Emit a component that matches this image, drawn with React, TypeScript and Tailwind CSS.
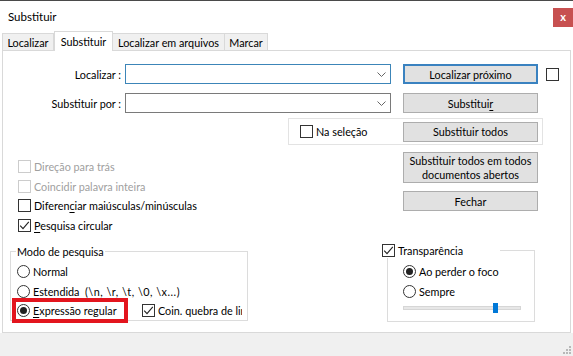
import React from "react"

const Check = ({ checked = false, disabled = false }: { checked?: boolean; disabled?: boolean }) => (
  <span
    className={`w-[13px] h-[13px] shrink-0 border bg-white flex items-center justify-center ${
      disabled ? "border-[#cccccc]" : "border-[#333333]"
    }`}
  >
    {checked && (
      <svg width="11" height="11" viewBox="0 0 11 11">
        <path d="M1.2 5.6 L4 8.6 L9.8 1.8" fill="none" stroke="#222" strokeWidth="1.1" />
      </svg>
    )}
  </span>
)

const Radio = ({ checked = false }: { checked?: boolean }) => (
  <span className="w-[13px] h-[13px] shrink-0 rounded-full border border-[#333333] bg-white flex items-center justify-center">
    {checked && <span className="w-[7px] h-[7px] rounded-full bg-[#222]" />}
  </span>
)

const Btn = ({
  children,
  focused = false,
  className = "",
}: {
  children: React.ReactNode
  focused?: boolean
  className?: string
}) => (
  <div
    className={`w-[135px] shrink-0 flex items-center justify-center text-center bg-[#e1e1e1] ${
      focused ? "border-2 border-[#3a82c0]" : "border border-[#adadad]"
    } ${className}`}
  >
    {children}
  </div>
)

const Combo = ({ focused = false }: { focused?: boolean }) => (
  <div
    className={`w-[266px] h-[20px] shrink-0 border bg-white flex items-center justify-end pr-[4px] ${
      focused ? "border-[#3c85b8]" : "border-[#7a7a7a]"
    }`}
  >
    <svg width="9" height="5" viewBox="0 0 9 5">
      <path d="M0.5 0.5 L4.5 4.5 L8.5 0.5" fill="none" stroke="#666" />
    </svg>
  </div>
)

const options = [
  { label: <>Direção para trás</>, disabled: true },
  { label: <>Coincidir palavra inteira</>, disabled: true },
  { label: <>Diferen<u className="underline-offset-2">c</u>iar maiúsculas/minúsculas</> },
  { label: <><u className="underline-offset-2">P</u>esquisa circular</>, checked: true },
]

export default function App() {
  return (
    <div className="w-[573px] h-[356px] bg-white flex flex-col overflow-hidden text-[10.8px] leading-[15px] text-black [font-family:Lato,sans-serif]">
      <div className="h-px bg-[#4a4a4a] shrink-0" />

      {/* title bar */}
      <div className="h-[30px] shrink-0 flex items-start justify-between">
        <span className="ml-[8px] mt-[8px] text-[11.5px]">Substituir</span>
        <div className="mt-[7px] w-[20px] h-[19px] bg-[#c75050] text-white flex items-center justify-center text-[11px] font-bold leading-none pb-[2px]">
          x
        </div>
      </div>

      {/* tabs */}
      <div className="h-[19px] shrink-0 flex items-end pl-[2px]">
        <div className="w-[52px] h-[17px] bg-[#f0f0f0] border border-b-0 border-[#d9d9d9] flex items-center justify-center">
          Localizar
        </div>
        <div className="relative z-10 w-[59px] h-[20px] mb-[-1px] bg-white border border-b-0 border-[#d9d9d9] flex items-start pt-[2px] justify-center">
          Substituir
        </div>
        <div className="w-[112px] h-[17px] bg-[#f0f0f0] border border-l-0 border-b-0 border-[#d9d9d9] flex items-center justify-center whitespace-nowrap">
          Localizar em arquivos
        </div>
        <div className="w-[43px] h-[17px] bg-[#f0f0f0] border border-l-0 border-b-0 border-[#d9d9d9] flex items-center justify-center">
          Marcar
        </div>
      </div>

      {/* panel */}
      <div className="ml-[2px] w-[569px] h-[283px] shrink-0 border border-[#d9d9d9] bg-white">
        <div className="mt-[13px] h-[20px] flex items-center">
          <span className="w-[118px] text-right">Localizar :</span>
          <div className="ml-[4px]">
            <Combo focused />
          </div>
          <Btn focused className="ml-[12px] h-[20px]">
            Localizar próximo
          </Btn>
          <div className="ml-[8px]">
            <Check />
          </div>
        </div>

        <div className="mt-[9px] h-[20px] flex items-center">
          <span className="w-[118px] text-right">Substituir por :</span>
          <div className="ml-[4px]">
            <Combo />
          </div>
          <Btn className="ml-[12px] h-[20px]">
            Substitui<u className="underline-offset-2">r</u>
          </Btn>
        </div>

        <div className="mt-[5px] ml-[285px] w-[255px] h-[27px] border border-[#e3e3e3] flex items-center pl-[11px] pr-[4px]">
          <Check />
          <span className="ml-[3px]">Na seleção</span>
          <Btn className="ml-auto h-[20px]">Substituir todos</Btn>
        </div>

        <div className="flex">
          {/* left column */}
          <div className="w-[379px] shrink-0 pt-[12px]">
            {options.map((o, i) => (
              <div key={i} className="h-[19.5px] flex items-center pl-[15px]">
                <Check checked={o.checked} disabled={o.disabled} />
                <span className={`ml-[3px] ${o.disabled ? "text-[#a0a0a0]" : ""}`}>{o.label}</span>
              </div>
            ))}

            <fieldset className="mt-[8.5px] ml-[7px] w-[238px] border border-[#dcdcdc]">
              <legend className="ml-[5px] px-[1px]">Modo de pesquisa</legend>
              <div className="pt-[2.5px] pl-[6px]">
                <div className="h-[20px] flex items-center">
                  <Radio />
                  <span className="ml-[3px]">Normal</span>
                </div>
                <div className="h-[20px] flex items-center">
                  <Radio />
                  <span className="ml-[3px] whitespace-pre">
                    Estendida  <span className="tracking-[0.5px]">(\n, \r, \t, \0, \x...)</span>
                  </span>
                </div>
                <div className="relative h-[19px] flex items-center">
                  <div className="w-[125px] shrink-0 flex items-center">
                    <Radio checked />
                    <span className="ml-[3px]">
                      <u className="underline-offset-2">E</u>xpressão regular
                    </span>
                  </div>
                  <div className="w-[100px] overflow-hidden whitespace-nowrap flex items-center">
                    <Check checked />
                    <span className="ml-[3px]">Coin. quebra de linha</span>
                  </div>
                  <div className="absolute left-[-5px] top-[-3px] w-[116px] h-[25px] border-[4px] border-[#e3151e]" />
                </div>
              </div>
            </fieldset>
          </div>

          {/* right column */}
          <div className="w-[185px] shrink-0">
            <Btn className="mt-[7px] ml-[21px] h-[31px] leading-[14px]">
              Substituir todos em todos
              <br />
              documentos abertos
            </Btn>
            <Btn className="mt-[8px] ml-[21px] h-[20px]">Fechar</Btn>

            <fieldset className="mt-[31.5px] ml-[5px] w-[148px] border border-[#dcdcdc]">
              <legend className="-ml-[6px] w-[118px]">
                <span className="flex items-center">
                  <Check checked />
                  <span className="ml-[3px]">Transparência</span>
                </span>
              </legend>
              <div className="pt-[3.5px] pl-[15px]">
                <div className="h-[20px] flex items-center">
                  <Radio checked />
                  <span className="ml-[3px]">Ao perder o foco</span>
                </div>
                <div className="h-[20px] flex items-center">
                  <Radio />
                  <span className="ml-[3px]">Sempre</span>
                </div>
                <div className="relative w-[118px] h-[12px] mt-[1px] mb-[7px] flex items-center">
                  <div className="w-full h-[4px] bg-[#e7e7e7] border border-[#d6d6d6]" />
                  <div className="absolute left-[90px] top-[1px] w-[5px] h-[10px] bg-[#0078d7]" />
                </div>
              </div>
            </fieldset>
          </div>
        </div>
      </div>

      {/* footer */}
      <div className="flex-1 bg-[#f0f0f0] flex items-end justify-end pr-[2px] pb-[2px]">
        <svg width="10" height="10" viewBox="0 0 10 10">
          <rect x="8" y="2" width="2" height="2" fill="#b8b8b8" />
          <rect x="5" y="5" width="2" height="2" fill="#b8b8b8" />
          <rect x="8" y="5" width="2" height="2" fill="#b8b8b8" />
          <rect x="2" y="8" width="2" height="2" fill="#b8b8b8" />
          <rect x="5" y="8" width="2" height="2" fill="#b8b8b8" />
          <rect x="8" y="8" width="2" height="2" fill="#b8b8b8" />
        </svg>
      </div>
    </div>
  )
}
